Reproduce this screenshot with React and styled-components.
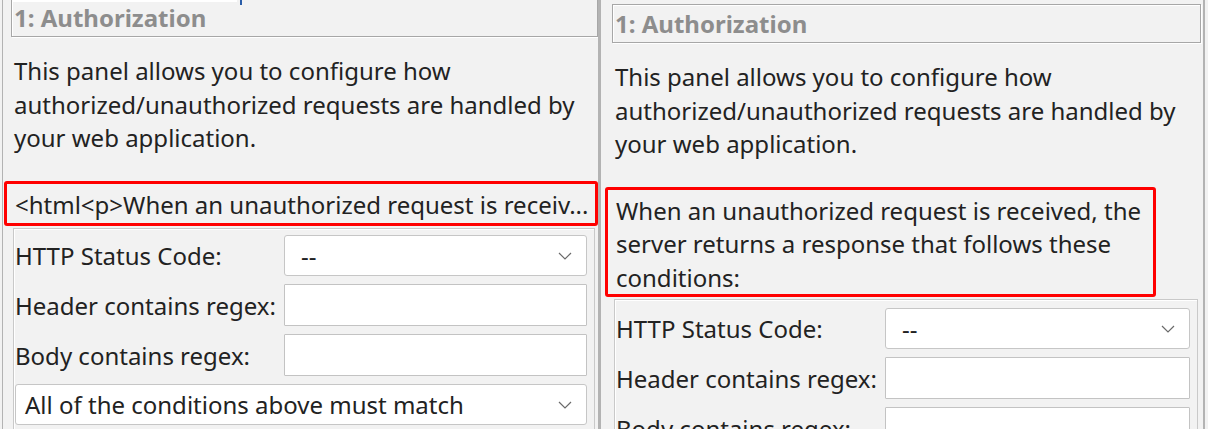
import React from "react";
import styled, { createGlobalStyle } from "styled-components";

const GlobalStyle = createGlobalStyle`
  html, body {
    margin: 0;
    padding: 0;
    background: #f2f2f2;
  }
  body {
    font-family: "Noto Sans", "Open Sans", sans-serif;
    color: #222222;
  }
`;

const Page = styled.div`
  display: flex;
  align-items: flex-start;
  width: 1208px;
  height: 429px;
  overflow: hidden;
  background: #f2f2f2;
`;

const Pane = styled.div`
  position: relative;
  box-sizing: border-box;
  flex: 0 0 ${p => p.width}px;
  height: 429px;
  overflow: hidden;
  margin-left: ${p => p.offsetLeft}px;
  padding: 0 ${p => p.padRight}px 0 ${p => p.padLeft}px;
  border-left: ${p => p.edge}px solid #b3b3b3;
  border-right: ${p => p.edgeRight}px solid #b3b3b3;
`;

// column of the panel; shift pulls the left capture up where it was cropped
const Column = styled.div`
  display: flex;
  flex-direction: column;
  margin-top: ${p => p.shift}px;
  & > * {
    flex-shrink: 0;
  }
`;

const CroppedField = styled.div`
  position: absolute;
  top: 0;
  left: 9px;
  width: 225px;
  height: 2px;
  background: #ffffff;
  &::after {
    content: "";
    position: absolute;
    left: 228px;
    top: 0;
    width: 2px;
    height: 5px;
    background: #2a5da8;
  }
`;

const TitleBox = styled.div`
  box-sizing: border-box;
  height: 39px;
  padding-left: 2px;
  display: flex;
  align-items: center;
  border: 1px solid #a7a7a7;
  box-shadow: inset 1px 1px 0 #ffffff, 1px 1px 0 #ffffff;
  font-size: 24px;
  font-weight: 700;
  color: #8d8d8d;
  white-space: nowrap;
`;

const Description = styled.div`
  margin-top: 17px;
  padding-left: 3px;
  font-size: 24px;
  line-height: 33.5px;
`;

const Line = styled.div`
  white-space: nowrap;
`;

const Callout = styled.div`
  box-sizing: border-box;
  margin: 26px 0 0 -7px;
  align-self: ${p => (p.fit ? "flex-start" : "stretch")};
  padding: ${p => (p.fit ? "4px 12px 0 8px" : "4px 12px 2px 8px")};
  border: 3px solid #ff0000;
  border-radius: 3px;
  font-size: 24px;
  line-height: 33.5px;
`;

const ConditionGroup = styled.div`
  margin: 2px 3px 0 2px;
  padding: ${p => (p.roomy ? 8 : 6)}px 7px 8px 1px;
  border: 1px solid #c9c9c9;
  box-shadow: inset 1px 1px 0 #ffffff;
  display: grid;
  grid-template-columns: auto 1fr;
  column-gap: 8px;
  row-gap: 8px;
  align-items: center;
`;

const Label = styled.div`
  font-size: 24px;
  white-space: nowrap;
`;

const Combo = styled.div`
  grid-column: ${p => (p.wide ? "1 / -1" : "auto")};
  box-sizing: border-box;
  height: 41px;
  display: flex;
  align-items: center;
  justify-content: space-between;
  padding: 0 14px 0 ${p => p.indent}px;
  background: #ffffff;
  border: 1px solid #c6c6c6;
  border-radius: 3px;
  font-size: 24px;
  white-space: nowrap;
`;

const TextField = styled.div`
  box-sizing: border-box;
  height: 42px;
  background: #ffffff;
  border: 1px solid #c3c3c3;
  border-radius: 1px;
`;

const Chevron = () => (
  <svg width="14" height="8" viewBox="0 0 14 8">
    <polyline
      points="1,1 7,7 13,1"
      fill="none"
      stroke="#6a6a6a"
      strokeWidth="1.2"
    />
  </svg>
);

const AuthPanel = ({ notice, noticeFit }) => (
  <>
    <TitleBox>1: Authorization</TitleBox>
    <Description>
      <Line>This panel allows you to configure how</Line>
      <Line>authorized/unauthorized requests are handled by</Line>
      <Line>your web application.</Line>
    </Description>
    <Callout fit={noticeFit}>
      {notice.map(text => (
        <Line key={text}>{text}</Line>
      ))}
    </Callout>
    <ConditionGroup roomy={noticeFit}>
      <Label>HTTP Status Code:</Label>
      <Combo indent={16}>
        <span>--</span>
        <Chevron />
      </Combo>
      <Label>Header contains regex:</Label>
      <TextField />
      <Label>Body contains regex:</Label>
      <TextField />
      <Combo wide indent={9}>
        <span>All of the conditions above must match</span>
        <Chevron />
      </Combo>
    </ConditionGroup>
  </>
);

export default function App() {
  return (
    <Page>
      <GlobalStyle />
      <Pane width={596} offsetLeft={2} padLeft={8} padRight={0} edge={1} edgeRight={0}>
        <CroppedField />
        <Column shift={-2}>
          <AuthPanel
            notice={["<html<p>When an unauthorized request is receiv..."]}
          />
        </Column>
      </Pane>
      <Pane width={607} offsetLeft={0} padLeft={11} padRight={2} edge={3} edgeRight={2}>
        <Column shift={4}>
          <AuthPanel
            noticeFit
            notice={[
              "When an unauthorized request is received, the",
              "server returns a response that follows these",
              "conditions:"
            ]}
          />
        </Column>
      </Pane>
    </Page>
  );
}
